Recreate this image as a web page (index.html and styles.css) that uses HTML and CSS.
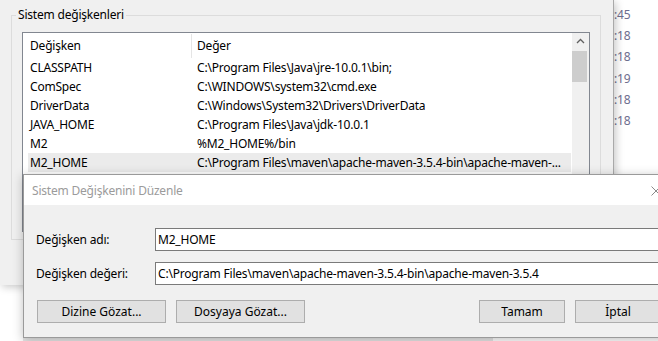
FILE: index.html
```html
<!DOCTYPE html>
<html lang="tr">
<head>
  <meta charset="UTF-8" />
  <title>Sistem Değişkenini Düzenle</title>
  <link rel="stylesheet" href="styles.css">
</head>
<body>
  <div class="desktop">
    <!-- arkadaki pencere: sadece saatler görünüyor -->
    <div class="side-window">
      <ul class="times">
        <li>:45</li>
        <li>:18</li>
        <li>:18</li>
        <li>:19</li>
        <li>:18</li>
        <li>:18</li>
      </ul>
    </div>

    <!-- Ortam değişkenleri penceresi -->
    <div class="env-window">
      <fieldset class="group">
        <legend>Sistem değişkenleri</legend>
        <div class="listview">
          <div class="list-main">
            <div class="list-head">
              <span class="col-name">Değişken</span>
              <span class="col-value">Değer</span>
            </div>
            <div class="list-row"><span class="col-name">CLASSPATH</span><span class="col-value">C:\Program Files\Java\jre-10.0.1\bin;</span></div>
            <div class="list-row"><span class="col-name">ComSpec</span><span class="col-value">C:\WINDOWS\system32\cmd.exe</span></div>
            <div class="list-row"><span class="col-name">DriverData</span><span class="col-value">C:\Windows\System32\Drivers\DriverData</span></div>
            <div class="list-row"><span class="col-name">JAVA_HOME</span><span class="col-value">C:\Program Files\Java\jdk-10.0.1</span></div>
            <div class="list-row"><span class="col-name">M2</span><span class="col-value">%M2_HOME%/bin</span></div>
            <div class="list-row selected"><span class="col-name">M2_HOME</span><span class="col-value">C:\Program Files\maven\apache-maven-3.5.4-bin\apache-maven-...</span></div>
          </div>
          <div class="scrollbar">
            <svg class="arrow-up" width="17" height="17" viewBox="0 0 17 17">
              <path d="M5 10 L8.5 6.5 L12 10" fill="none" stroke="#606060" stroke-width="1.3"/>
            </svg>
            <div class="thumb"></div>
          </div>
        </div>
      </fieldset>
    </div>

    <div class="bottom-strip"></div>

    <!-- Düzenleme penceresi -->
    <div class="dialog">
      <div class="dialog-title">
        <span>Sistem Değişkenini Düzenle</span>
        <svg class="close" width="10" height="10" viewBox="0 0 10 10">
          <path d="M0.5 0.5 L9.5 9.5 M9.5 0.5 L0.5 9.5" stroke="#8a8a8a" stroke-width="1"/>
        </svg>
      </div>
      <div class="dialog-body">
        <div class="field">
          <label>Değişken adı:</label>
          <div class="input">M2_HOME</div>
        </div>
        <div class="field">
          <label>Değişken değeri:</label>
          <div class="input">C:\Program Files\maven\apache-maven-3.5.4-bin\apache-maven-3.5.4</div>
        </div>
        <div class="buttons">
          <button class="btn wide">Dizine Gözat...</button>
          <button class="btn wide">Dosyaya Gözat...</button>
          <span class="spacer"></span>
          <button class="btn">Tamam</button>
          <button class="btn">İptal</button>
        </div>
      </div>
    </div>
  </div>
</body>
</html>
```

FILE: styles.css
```css
* {
  margin: 0;
  padding: 0;
  box-sizing: border-box;
}

body {
  overflow: hidden;
  background: #fff;
  font-family: "Noto Sans", "Liberation Sans", sans-serif;
  font-size: 12px;
  letter-spacing: -0.2px;
  color: #000;
}

/* masaüstü: pencereler üst üste */
.desktop {
  position: relative;
  width: 658px;
  height: 341px;
  overflow: hidden;
}

/* sağdaki beyaz pencere */
.side-window {
  position: absolute;
  left: 614px;
  top: 0;
  width: 60px;
  height: 341px;
  background: #fff;
}
.times {
  list-style: none;
  padding-top: 6px;
  color: #6e6e8e;
}
.times li {
  height: 21.2px;
  line-height: 18px;
}

/* arka pencere */
.env-window {
  position: absolute;
  left: 0;
  top: 0;
  width: 614px;
  height: 285px;
  background: #f0f0f0;
  border-right: 1px solid #a9a9a9;
  box-shadow: 2px 2px 8px rgba(0, 0, 0, 0.22);
  padding: 7px 12px 0 11px;
}

.group {
  height: 233px;
  border: 1px solid #dcdcdc;
  padding: 9px 10px 0 10px;
}
.group legend {
  margin-left: -6px;
  padding: 0 2px;
  line-height: 16px;
}

.listview {
  display: flex;
  height: 200px;
  background: #fff;
  border: 1px solid #828790;
}
.list-main {
  flex: 1;
}
.list-head {
  display: flex;
  height: 25px;
  align-items: center;
}
.list-head .col-name {
  border-right: 1px solid #e5e5e5;
  height: 24px;
  line-height: 24px;
}
.list-row {
  display: flex;
  height: 19px;
  line-height: 19px;
  white-space: nowrap;
  margin-left: 5px;
}
.list-row.selected {
  background: #ebebeb;
}
.col-name {
  width: 169px;
  padding-left: 7px;
}
.list-row .col-name {
  width: 164px;
  padding-left: 2px;
}
.col-value {
  padding-left: 5px;
}

.scrollbar {
  width: 18px;
  background: #f0f0f0;
  border-left: 1px solid #fff;
}
.arrow-up {
  display: block;
}
.thumb {
  width: 15px;
  height: 31px;
  margin-top: 1px;
  background: #cdcdcd;
}

.bottom-strip {
  position: absolute;
  left: 23px;
  top: 337px;
  width: 470px;
  height: 4px;
  background: #e6e6e6;
}

/* düzenleme penceresi */
.dialog {
  position: absolute;
  left: 23px;
  top: 174px;
  width: 651px;
  height: 164px;
  border: 1px solid #9a9a9a;
  background: #f0f0f0;
  box-shadow: 0 2px 10px rgba(0, 0, 0, 0.25);
}
.dialog-title {
  display: flex;
  align-items: center;
  justify-content: space-between;
  height: 30px;
  background: #fff;
  padding: 0 12px 0 8px;
  color: #9b9b9b;
}
.dialog-title .close {
  margin-top: 1px;
}

.dialog-body {
  padding: 23px 12px 14px 12px;
}
.field {
  display: flex;
  align-items: center;
  margin-bottom: 11px;
}
.field + .field {
  margin-bottom: 15px;
}
.field label {
  width: 119px;
}
.input {
  flex: 1;
  height: 23px;
  line-height: 21px;
  padding-left: 2px;
  background: #fff;
  border: 1px solid #7a7a7a;
  white-space: nowrap;
  overflow: hidden;
}

.buttons {
  display: flex;
  gap: 10px;
  padding-left: 1px;
}
.spacer {
  flex: 1;
}
.btn {
  width: 86px;
  height: 23px;
  font: inherit;
  color: #000;
  background: #e1e1e1;
  border: 1px solid #adadad;
}
.btn.wide {
  width: 129px;
}
```
